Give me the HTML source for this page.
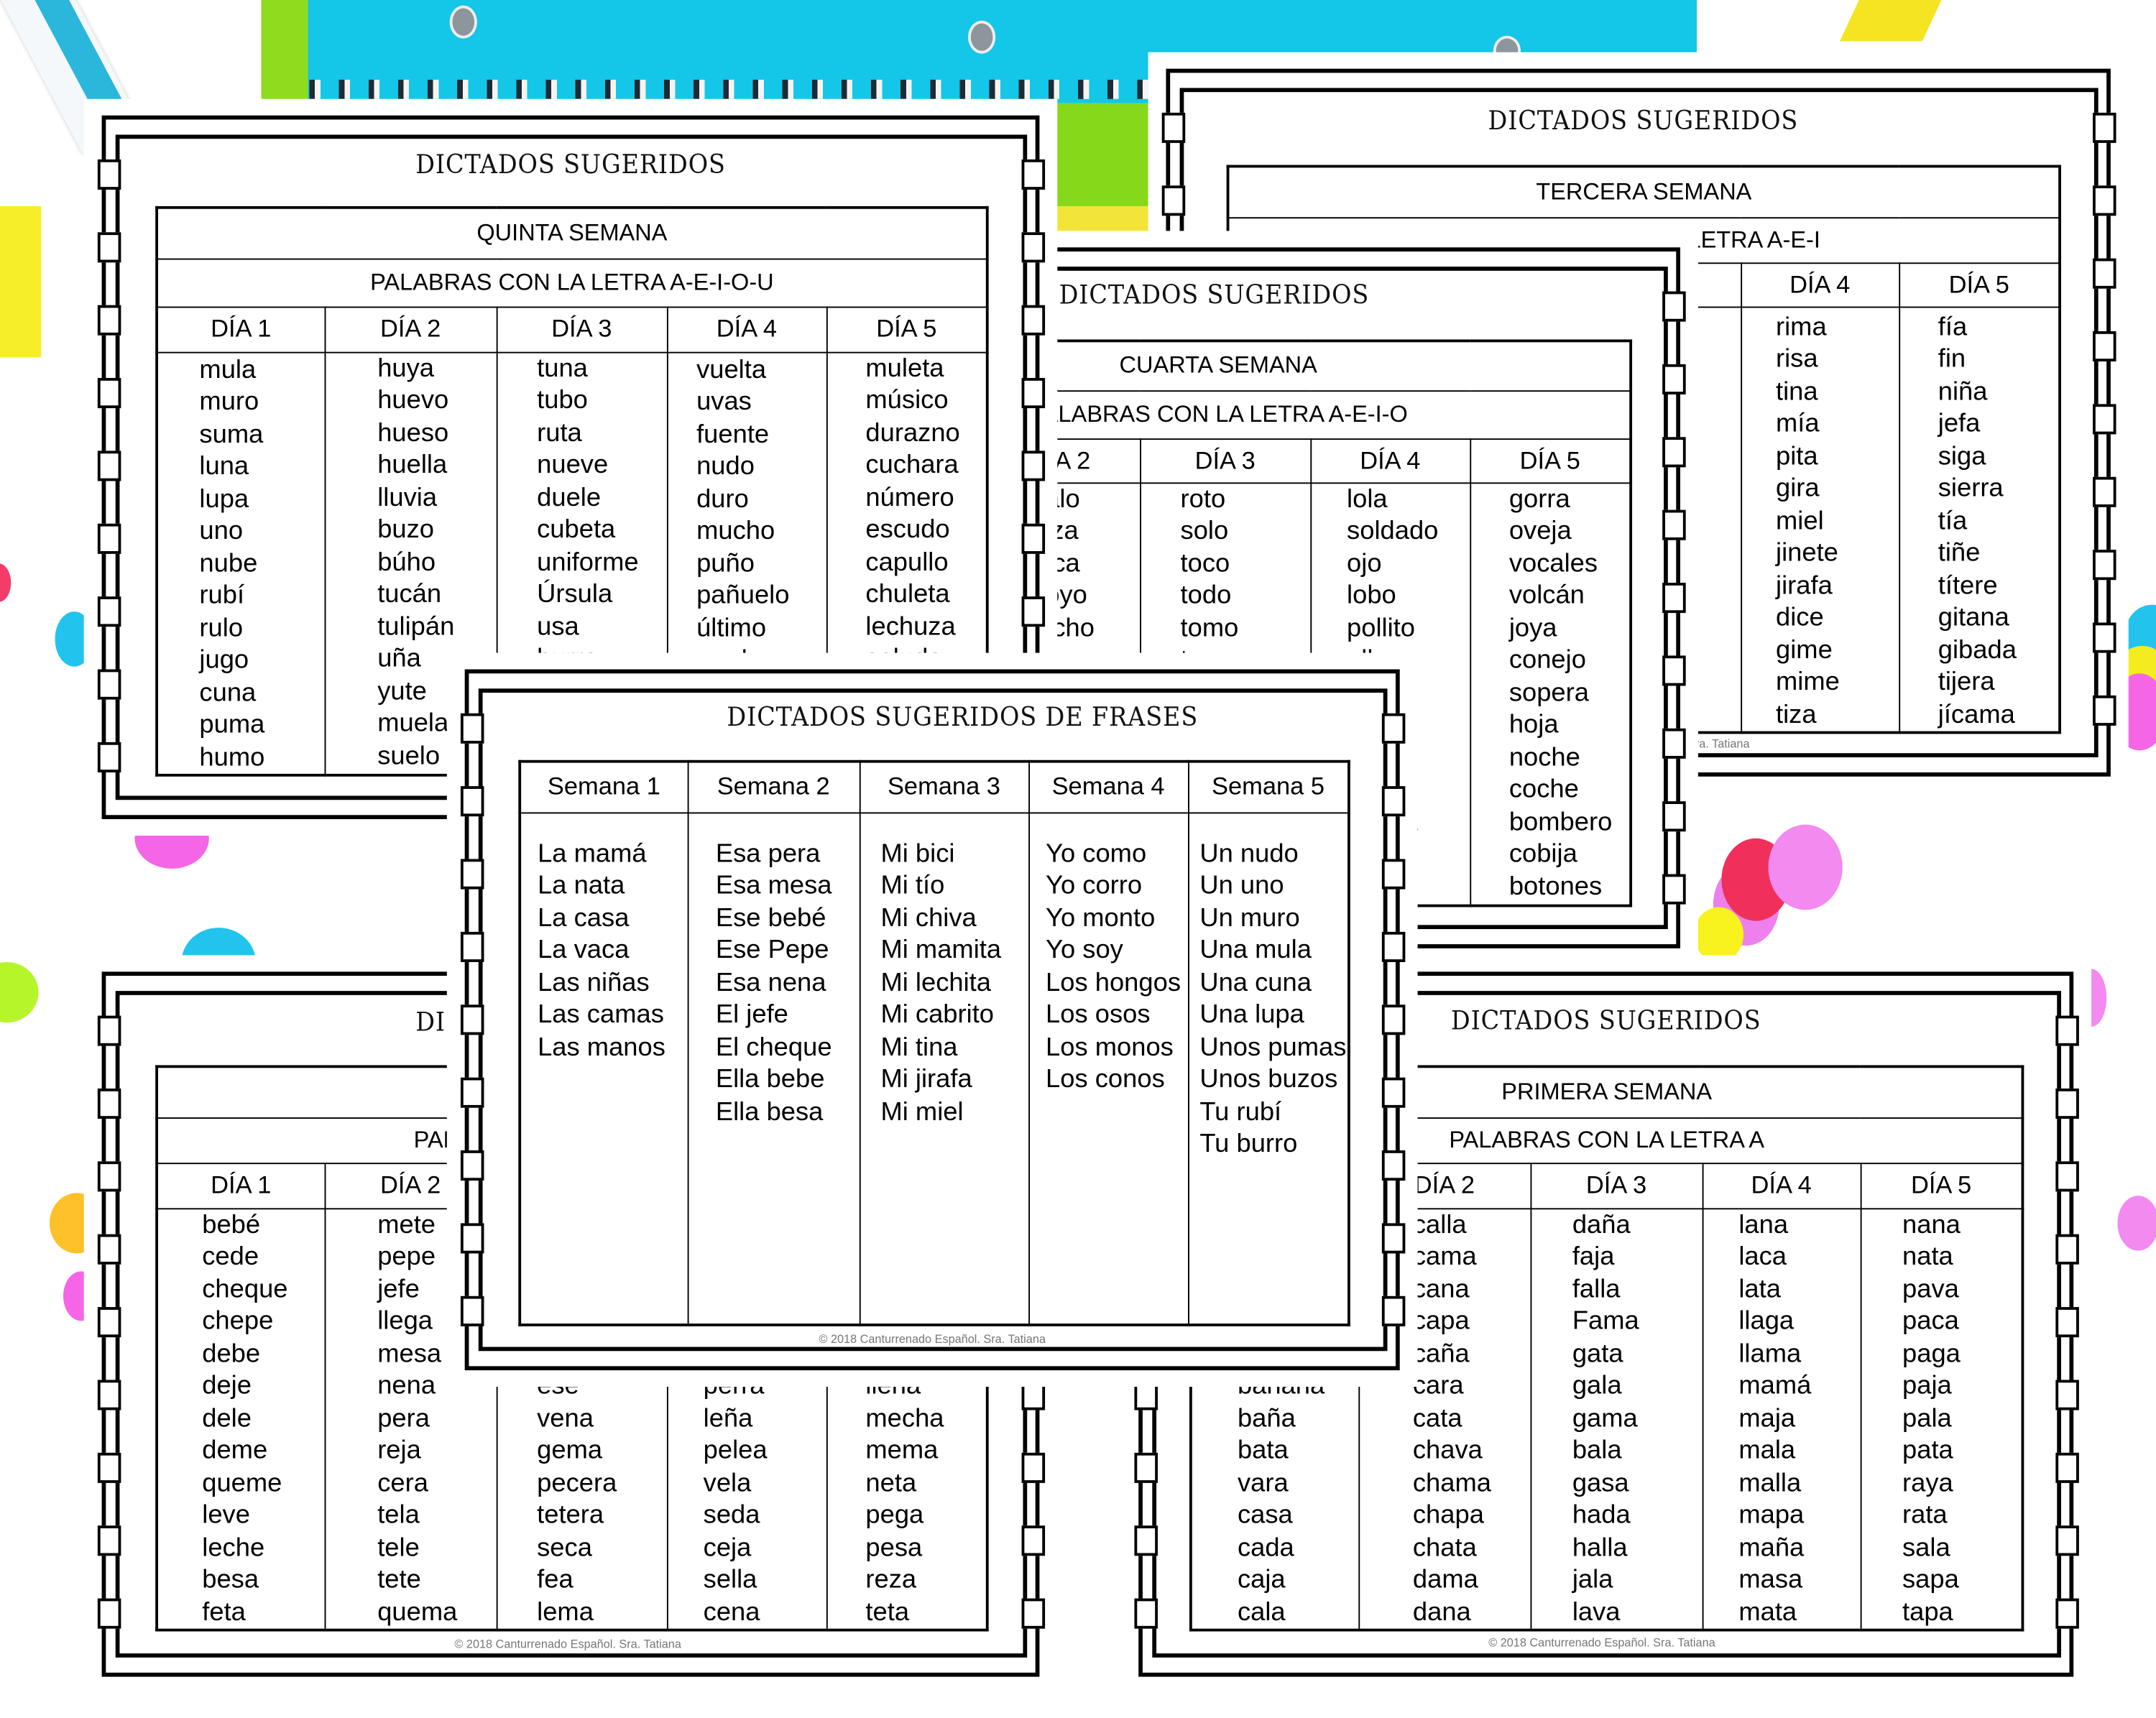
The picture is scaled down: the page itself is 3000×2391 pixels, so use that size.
<!DOCTYPE html>
<html><head><meta charset="utf-8">
<style>
html,body{margin:0;padding:0;background:#fff;overflow:hidden}
#c{position:absolute;left:0;top:0;width:1568px;height:1250px;transform:scale(1.91327,1.9128);transform-origin:0 0;overflow:hidden;background:#fff}
.L{position:absolute;left:0;top:0;width:1568px;height:1250px}
.a{position:absolute}
.bg{position:absolute;background:#fff}
.fo{position:absolute;border:3.5px solid #000;box-sizing:border-box}
.ring{position:absolute;width:17px;height:22px;background:#fff;border:2.5px solid #000;box-sizing:border-box}
.ti{position:absolute;width:600px;text-align:center;font-family:"DejaVu Serif","Liberation Serif",serif;font-size:19px;line-height:24px;letter-spacing:0.5px;color:#111;transform:scaleX(0.92)}
table.t{position:absolute;border-collapse:collapse;table-layout:fixed;font-family:"Liberation Sans",sans-serif;color:#000;background:#fff;border:2.5px solid #000}
.t td{border:1.5px solid #000;padding:0;overflow:hidden}
.t .hd td{text-align:center;font-size:17px}
.t .dd td{text-align:center;font-size:18px}
.t .bd td{vertical-align:top;font-size:19px;line-height:23.5px;text-align:left;white-space:nowrap}
.cp{position:absolute;width:300px;text-align:center;font-family:"Liberation Sans",sans-serif;font-size:8.5px;color:#777}
.dot{position:absolute;border-radius:50%}
</style></head><body>
<div id="c">
<div class="a" style="left:190px;top:0;width:36px;height:75px;background:#8fdc1e"></div>
<div class="a" style="left:224px;top:0;width:1010px;height:75px;background:#14c6e8"></div>
<div class="a" style="left:225px;top:58px;width:620px;height:14px;background:repeating-linear-gradient(90deg,#1d2a33 0 4px,#f4f4f4 4px 8px,#14c6e8 8px 21.5px)"></div>
<div class="dot" style="left:327px;top:4px;width:16px;height:20px;background:#8c969c;border:2px solid #eee"></div>
<div class="dot" style="left:704px;top:15px;width:16px;height:20px;background:#8c969c;border:2px solid #eee"></div>
<div class="dot" style="left:1086px;top:26px;width:16px;height:18px;background:#8c969c;border:2px solid #eee"></div>
<div class="a" style="left:765px;top:75px;width:80px;height:90px;background:#86d81a"></div>
<div class="a" style="left:765px;top:150px;width:80px;height:18px;background:#f3e43a"></div>
<div class="a" style="left:-10px;top:-20px;width:48px;height:150px;background:#f4f8fa;transform:rotate(-28deg);transform-origin:0 0;box-shadow:0 0 3px #ccc"></div>
<div class="a" style="left:20px;top:-10px;width:22px;height:130px;background:#2bb6dc;transform:rotate(-28deg);transform-origin:0 0"></div>
<div class="a" style="left:0;top:150px;width:30px;height:110px;background:#f6ee28"></div>
<div class="a" style="left:1345px;top:0;width:60px;height:30px;background:#f5e422;transform:skewX(-25deg)"></div>
<div class="dot" style="left:98px;top:588px;width:54px;height:44px;background:#f466e6"></div>
<div class="dot" style="left:132px;top:675px;width:54px;height:50px;background:#22c4ee"></div>
<div class="dot" style="left:-18px;top:700px;width:46px;height:44px;background:#b6f52a"></div>
<div class="dot" style="left:36px;top:868px;width:40px;height:44px;background:#ffc12a"></div>
<div class="dot" style="left:46px;top:925px;width:26px;height:36px;background:#f466e6"></div>
<div class="dot" style="left:-10px;top:410px;width:18px;height:28px;background:#f33c6a"></div>
<div class="dot" style="left:40px;top:445px;width:28px;height:40px;background:#22c4ee"></div>
<div class="dot" style="left:1545px;top:440px;width:40px;height:46px;background:#22c4ee"></div>
<div class="dot" style="left:1538px;top:470px;width:40px;height:40px;background:#f5ec20"></div>
<div class="dot" style="left:1536px;top:490px;width:40px;height:56px;background:#f466e6"></div>
<div class="dot" style="left:1246px;top:628px;width:48px;height:60px;background:#ee80ee"></div>
<div class="dot" style="left:1252px;top:610px;width:50px;height:60px;background:#f0305a"></div>
<div class="dot" style="left:1286px;top:600px;width:54px;height:62px;background:#f28af0"></div>
<div class="dot" style="left:1232px;top:660px;width:36px;height:40px;background:#f8f21e"></div>
<div class="dot" style="left:1510px;top:705px;width:22px;height:42px;background:#f28af0"></div>
<div class="dot" style="left:1540px;top:870px;width:30px;height:40px;background:#f28af0"></div>

<div class="L" id="p3">
<div class="ti" style="left:895px;top:76px">DICTADOS SUGERIDOS</div>
<table class="t" style="left:892px;top:120px;width:605px;height:410px">
<colgroup><col style="width:128px"><col style="width:120px"><col style="width:125px"><col style="width:115px"><col style="width:117px"></colgroup>
<tr class="hd" style="height:37px"><td colspan="5">TERCERA SEMANA</td></tr>
<tr class="hd" style="height:33px"><td colspan="5">PALABRAS CON LA LETRA A-E-I</td></tr>
<tr class="dd" style="height:32px"><td>DÍA 1</td><td>DÍA 2</td><td>DÍA 3</td><td>DÍA 4</td><td>DÍA 5</td></tr>
<tr class="bd"><td></td><td></td><td></td>
<td style="padding:3px 0 0 25px">rima<br>risa<br>tina<br>mía<br>pita<br>gira<br>miel<br>jinete<br>jirafa<br>dice<br>gime<br>mime<br>tiza</td>
<td style="padding:3px 0 0 28px">fía<br>fin<br>niña<br>jefa<br>siga<br>sierra<br>tía<br>tiñe<br>títere<br>gitana<br>gibada<br>tijera<br>jícama</td></tr>
</table>
<div class="cp" style="left:1040px;top:536px">© 2018 Canturrenado Español. Sra. Tatiana</div>
</div>

<div class="L" id="p4">
<div class="ti" style="left:583px;top:203px">DICTADOS SUGERIDOS</div>
<table class="t" style="left:585px;top:247px;width:600px;height:413px">
<colgroup><col style="width:127px"><col style="width:116px"><col style="width:124px"><col style="width:116px"><col style="width:117px"></colgroup>
<tr class="hd" style="height:36px"><td colspan="5">CUARTA SEMANA</td></tr>
<tr class="hd" style="height:35px"><td colspan="5">PALABRAS CON LA LETRA A-E-I-O</td></tr>
<tr class="dd" style="height:32px"><td>DÍA 1</td><td>DÍA 2</td><td>DÍA 3</td><td>DÍA 4</td><td>DÍA 5</td></tr>
<tr class="bd"><td></td>
<td style="padding:0 0 0 36px">palo<br>loza<br>foca<br>hoyo<br>techo</td>
<td style="padding:0 0 0 29px">roto<br>solo<br>toco<br>todo<br>tomo<br>toro</td>
<td style="padding:0 0 0 26px">lola<br>soldado<br>ojo<br>lobo<br>pollito<br>olla<br>poste<br>codo<br>pelo<br>modo<br>pelota<br>ropa<br>foco</td>
<td style="padding:0 0 0 28px">gorra<br>oveja<br>vocales<br>volcán<br>joya<br>conejo<br>sopera<br>hoja<br>noche<br>coche<br>bombero<br>cobija<br>botones</td></tr>
</table>
</div>

<div class="L" id="p1">
<div class="ti" style="left:115px;top:108px">DICTADOS SUGERIDOS</div>
<table class="t" style="left:113px;top:150px;width:604px;height:413px">
<colgroup><col style="width:122px"><col style="width:125px"><col style="width:124px"><col style="width:116px"><col style="width:117px"></colgroup>
<tr class="hd" style="height:37px"><td colspan="5">QUINTA SEMANA</td></tr>
<tr class="hd" style="height:35px"><td colspan="5">PALABRAS CON LA LETRA A-E-I-O-U</td></tr>
<tr class="dd" style="height:33px"><td>DÍA 1</td><td>DÍA 2</td><td>DÍA 3</td><td>DÍA 4</td><td>DÍA 5</td></tr>
<tr class="bd">
<td style="padding:1px 0 0 30px">mula<br>muro<br>suma<br>luna<br>lupa<br>uno<br>nube<br>rubí<br>rulo<br>jugo<br>cuna<br>puma<br>humo</td>
<td style="padding:0 0 0 38px">huya<br>huevo<br>hueso<br>huella<br>lluvia<br>buzo<br>búho<br>tucán<br>tulipán<br>uña<br>yute<br>muela<br>suelo</td>
<td style="padding:0 0 0 29px">tuna<br>tubo<br>ruta<br>nueve<br>duele<br>cubeta<br>uniforme<br>Úrsula<br>usa<br>burro</td>
<td style="padding:1px 0 0 21px">vuelta<br>uvas<br>fuente<br>nudo<br>duro<br>mucho<br>puño<br>pañuelo<br>último<br>mudo</td>
<td style="padding:0 0 0 28px">muleta<br>músico<br>durazno<br>cuchara<br>número<br>escudo<br>capullo<br>chuleta<br>lechuza<br>saludo</td></tr>
</table>
</div>

<div class="L" id="p5">
<div class="ti" style="left:115px;top:732px">DICTADOS SUGERIDOS</div>
<table class="t" style="left:113px;top:775px;width:604px;height:412px">
<colgroup><col style="width:122px"><col style="width:125px"><col style="width:124px"><col style="width:116px"><col style="width:117px"></colgroup>
<tr class="hd" style="height:37px"><td colspan="5">SEGUNDA SEMANA</td></tr>
<tr class="hd" style="height:33px"><td colspan="5">PALABRAS CON LA LETRA E</td></tr>
<tr class="dd" style="height:33px"><td>DÍA 1</td><td>DÍA 2</td><td>DÍA 3</td><td>DÍA 4</td><td>DÍA 5</td></tr>
<tr class="bd">
<td style="padding:0 0 0 32px">bebé<br>cede<br>cheque<br>chepe<br>debe<br>deje<br>dele<br>deme<br>queme<br>leve<br>leche<br>besa<br>feta</td>
<td style="padding:0 0 0 38px">mete<br>pepe<br>jefe<br>llega<br>mesa<br>nena<br>pera<br>reja<br>cera<br>tela<br>tele<br>tete<br>quema</td>
<td style="padding:0 0 0 29px">peca<br>queso<br>cena<br>beca<br>pena<br>ese<br>vena<br>gema<br>pecera<br>tetera<br>seca<br>fea<br>lema</td>
<td style="padding:0 0 0 26px">pelo<br>mesa<br>leche<br>pesa<br>beso<br>perra<br>leña<br>pelea<br>vela<br>seda<br>ceja<br>sella<br>cena</td>
<td style="padding:0 0 0 28px">cepa<br>dedo<br>pecho<br>meta<br>lleno<br>llena<br>mecha<br>mema<br>neta<br>pega<br>pesa<br>reza<br>teta</td></tr>
</table>
<div class="cp" style="left:263px;top:1191px">© 2018 Canturrenado Español. Sra. Tatiana</div>
</div>

<div class="L" id="p6">
<div class="ti" style="left:868px;top:731px">DICTADOS SUGERIDOS</div>
<table class="t" style="left:865px;top:775px;width:605px;height:412px">
<colgroup><col style="width:122px"><col style="width:125px"><col style="width:125px"><col style="width:115px"><col style="width:118px"></colgroup>
<tr class="hd" style="height:37px"><td colspan="5">PRIMERA SEMANA</td></tr>
<tr class="hd" style="height:33px"><td colspan="5">PALABRAS CON LA LETRA A</td></tr>
<tr class="dd" style="height:33px"><td>DÍA 1</td><td>DÍA 2</td><td>DÍA 3</td><td>DÍA 4</td><td>DÍA 5</td></tr>
<tr class="bd">
<td style="padding:0 0 0 33px">abaca<br>ala<br>baba<br>bala<br>bana<br>banana<br>baña<br>bata<br>vara<br>casa<br>cada<br>caja<br>cala</td>
<td style="padding:0 0 0 39px">calla<br>cama<br>cana<br>capa<br>caña<br>cara<br>cata<br>chava<br>chama<br>chapa<br>chata<br>dama<br>dana</td>
<td style="padding:0 0 0 30px">daña<br>faja<br>falla<br>Fama<br>gata<br>gala<br>gama<br>bala<br>gasa<br>hada<br>halla<br>jala<br>lava</td>
<td style="padding:0 0 0 26px">lana<br>laca<br>lata<br>llaga<br>llama<br>mamá<br>maja<br>mala<br>malla<br>mapa<br>maña<br>masa<br>mata</td>
<td style="padding:0 0 0 30px">nana<br>nata<br>pava<br>paca<br>paga<br>paja<br>pala<br>pata<br>raya<br>rata<br>sala<br>sapa<br>tapa</td></tr>
</table>
<div class="cp" style="left:1015px;top:1190px">© 2018 Canturrenado Español. Sra. Tatiana</div>
</div>

<div class="L" id="fr">
<div class="ti" style="left:400px;top:510px">DICTADOS SUGERIDOS DE FRASES</div>
<table class="t" style="left:377px;top:553px;width:603px;height:412px">
<colgroup><col style="width:122px"><col style="width:125px"><col style="width:123px"><col style="width:116px"><col style="width:117px"></colgroup>
<tr class="dd" style="height:37px"><td>Semana 1</td><td>Semana 2</td><td>Semana 3</td><td>Semana 4</td><td>Semana 5</td></tr>
<tr class="bd">
<td style="padding:18px 0 0 12px">La mamá<br>La nata<br>La casa<br>La vaca<br>Las niñas<br>Las camas<br>Las manos</td>
<td style="padding:18px 0 0 20px">Esa pera<br>Esa mesa<br>Ese bebé<br>Ese Pepe<br>Esa nena<br>El jefe<br>El cheque<br>Ella bebe<br>Ella besa</td>
<td style="padding:18px 0 0 15px">Mi bici<br>Mi tío<br>Mi chiva<br>Mi mamita<br>Mi lechita<br>Mi cabrito<br>Mi tina<br>Mi jirafa<br>Mi miel</td>
<td style="padding:18px 0 0 12px">Yo como<br>Yo corro<br>Yo monto<br>Yo soy<br>Los hongos<br>Los osos<br>Los monos<br>Los conos</td>
<td style="padding:18px 0 0 8px">Un nudo<br>Un uno<br>Un muro<br>Una mula<br>Una cuna<br>Una lupa<br>Unos pumas<br>Unos buzos<br>Tu rubí<br>Tu burro</td></tr>
</table>
<div class="cp" style="left:528px;top:969px">© 2018 Canturrenado Español. Sra. Tatiana</div>
</div>
</div>
<script>
function frame(id,x0,y0,x1,y1){
  var L=document.getElementById(id),f=document.createDocumentFragment();
  function d(cls,st){var e=document.createElement('div');e.className=cls;e.style.cssText=st;f.appendChild(e);}
  d('bg','left:'+(x0-13)+'px;top:'+(y0-12)+'px;width:'+(x1-x0+26)+'px;height:'+(y1-y0+24)+'px');
  d('fo','left:'+x0+'px;top:'+y0+'px;width:'+(x1-x0)+'px;height:'+(y1-y0)+'px');
  d('fo','left:'+(x0+9.5)+'px;top:'+(y0+14)+'px;width:'+(x1-x0-19)+'px;height:'+(y1-y0-28)+'px');
  for(var y=y0+43;y<y1-25;y+=53){
    d('ring','left:'+(x0-3.5)+'px;top:'+(y-11)+'px');
    d('ring','left:'+(x1-13.5)+'px;top:'+(y-11)+'px');
  }
  L.insertBefore(f,L.firstChild);
}
frame('p3',848,50,1535,565);
frame('p4',540,180,1222,690);
frame('p1',74,84,756,596);
frame('p5',74,707,756,1220);
frame('p6',828,707,1508,1220);
frame('fr',338,487,1018,997);
</script>
</body></html>
